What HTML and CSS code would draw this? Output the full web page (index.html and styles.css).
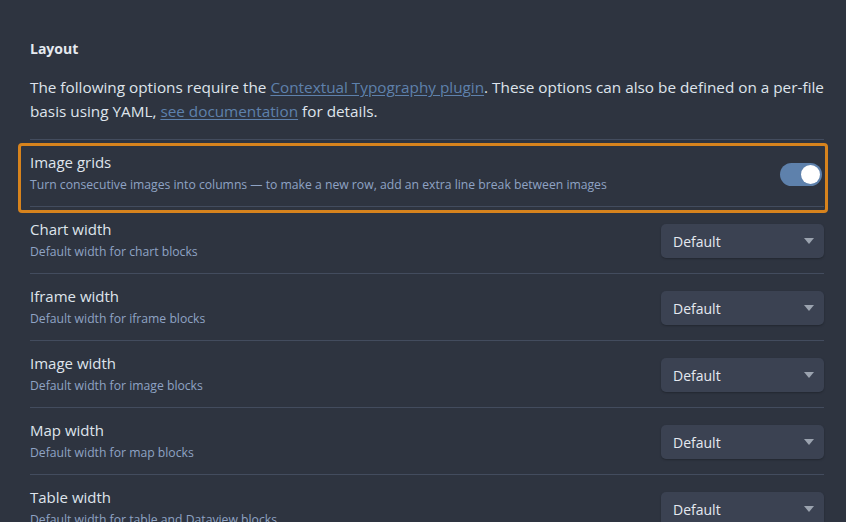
FILE: index.html
```html
<!DOCTYPE html>
<html>
<head>
<meta charset="utf-8">
<link rel="stylesheet" href="styles.css">
</head>
<body>
<div class="pane">
  <div class="heading">Layout</div>
  <p class="intro">The following options require the <a href="#">Contextual Typography plugin</a>. These options can also be defined on a per-file basis using YAML, <a href="#">see documentation</a> for details.</p>

  <div class="item highlighted">
    <div class="info">
      <div class="name">Image grids</div>
      <div class="desc">Turn consecutive images into columns — to make a new row, add an extra line break between images</div>
    </div>
    <div class="control">
      <div class="toggle"><span class="knob"></span></div>
    </div>
  </div>

  <div class="item">
    <div class="info">
      <div class="name">Chart width</div>
      <div class="desc">Default width for chart blocks</div>
    </div>
    <div class="control"><div class="select">Default<span class="caret"></span></div></div>
  </div>

  <div class="item">
    <div class="info">
      <div class="name">Iframe width</div>
      <div class="desc">Default width for iframe blocks</div>
    </div>
    <div class="control"><div class="select">Default<span class="caret"></span></div></div>
  </div>

  <div class="item">
    <div class="info">
      <div class="name">Image width</div>
      <div class="desc">Default width for image blocks</div>
    </div>
    <div class="control"><div class="select">Default<span class="caret"></span></div></div>
  </div>

  <div class="item">
    <div class="info">
      <div class="name">Map width</div>
      <div class="desc">Default width for map blocks</div>
    </div>
    <div class="control"><div class="select">Default<span class="caret"></span></div></div>
  </div>

  <div class="item">
    <div class="info">
      <div class="name">Table width</div>
      <div class="desc">Default width for table and Dataview blocks</div>
    </div>
    <div class="control"><div class="select">Default<span class="caret"></span></div></div>
  </div>
</div>
</body>
</html>
```
FILE: styles.css
```css
html, body {
  margin: 0;
  padding: 0;
  background: #2e3440;
  height: 100%;
  overflow: hidden;
}
body {
  font-family: "Open Sans", "Noto Sans", sans-serif;
  color: #dfe4ec;
}
.pane {
  padding: 39px 22px 0 30px;
}
.heading {
  font-size: 14px;
  font-weight: 700;
  line-height: 20px;
  color: #e5e9f0;
}
.intro {
  margin: 16px 0 16px;
  font-size: 15.3px;
  line-height: 24px;
  color: #dfe4ec;
}
.intro a {
  color: #5e81ac;
  text-decoration: underline;
  text-underline-offset: 2px;
}
.item {
  position: relative;
  display: flex;
  align-items: center;
  border-top: 1px solid #434c5e;
  padding: 11px 0 9px;
}
.item .info {
  flex: 1;
}
.name {
  font-size: 15px;
  line-height: 22px;
  color: #dfe4ec;
}
.desc {
  font-size: 12.2px;
  line-height: 24px;
  color: #8fa3c4;
}
.highlighted::after {
  content: "";
  position: absolute;
  left: -12px;
  right: -4px;
  top: 3px;
  bottom: -7px;
  border: 3px solid #d7831d;
  border-radius: 4px;
  pointer-events: none;
}
.toggle {
  width: 42px;
  height: 23px;
  border-radius: 12px;
  background: #5e81ac;
  position: relative;
  margin-right: 2px;
}
.knob {
  position: absolute;
  top: 2px;
  right: 2px;
  width: 19px;
  height: 19px;
  border-radius: 50%;
  background: #ffffff;
}
.select {
  width: 163px;
  height: 34px;
  box-sizing: border-box;
  background: #3b4252;
  border-radius: 5px;
  box-shadow: 0 1px 2px rgba(0,0,0,0.25);
  display: flex;
  align-items: center;
  padding-left: 12px;
  font-size: 14px;
  color: #e5e9f0;
  position: relative;
}
.caret {
  position: absolute;
  right: 10px;
  top: 14px;
  width: 0;
  height: 0;
  border-left: 5px solid transparent;
  border-right: 5px solid transparent;
  border-top: 6px solid #9ba3af;
}
```
